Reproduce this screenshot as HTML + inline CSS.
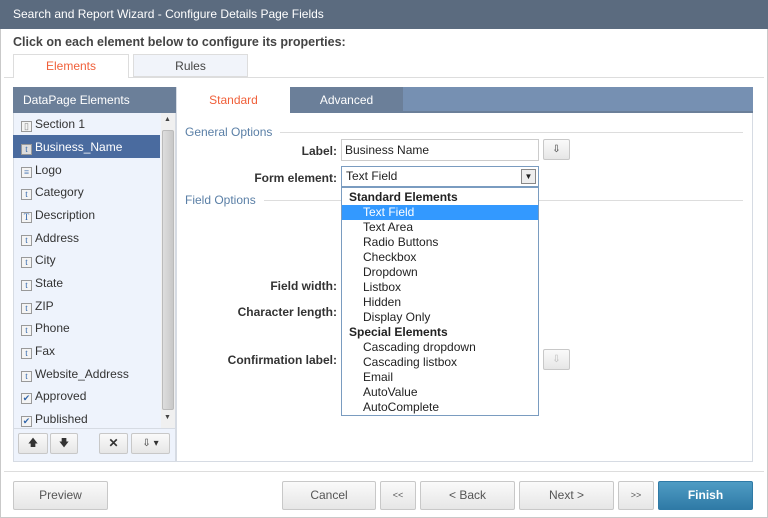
<!DOCTYPE html>
<html><head><style>
*{box-sizing:border-box;margin:0;padding:0}
body{width:768px;height:518px;background:#fff;font-family:"Liberation Sans",sans-serif;font-size:12px;color:#222;position:relative;overflow:hidden}
.a{position:absolute}
.btn{position:absolute;border:1px solid #c8c8c8;background:linear-gradient(#fafafa,#e6e6e6);text-align:center;color:#555;font-size:12px;border-radius:2px}
.item{position:absolute;left:21px;font-size:12px;color:#333}
.ic{display:inline-block;width:11px;height:11px;border:1px solid #999;background:#f4f4f4;font-size:9px;line-height:9px;text-align:center;color:#3366aa;margin-right:3px;vertical-align:-1px;font-family:"Liberation Serif",serif}
.dd div{height:15px;line-height:15px;padding-left:21px;font-size:12px}
.lbl{position:absolute;font-weight:bold;font-size:12px;color:#333;text-align:right;width:160px}
</style></head><body>
<div class="a" style="left:0;top:0;width:768px;height:518px;border:1px solid #c9c9c9"></div>
<div class="a" style="left:0;top:0;width:768px;height:29px;background:#5b6b7f;color:#fff;font-size:12px;line-height:29px;padding-left:13px">Search and Report Wizard - Configure Details Page Fields</div>
<div class="a" style="left:13px;top:35px;font-weight:bold;color:#444;font-size:12.5px">Click on each element below to configure its properties:</div>
<div class="a" style="left:4px;top:77px;width:760px;height:1px;background:#ddd"></div>
<div class="a" style="left:13px;top:54px;width:116px;height:24px;background:#fff;border:1px solid #ddd;border-bottom:none;color:#f0603a;text-align:center;line-height:23px">Elements</div>
<div class="a" style="left:133px;top:54px;width:115px;height:23px;background:#f1f4fa;border:1px solid #ddd;color:#444;text-align:center;line-height:23px">Rules</div>
<!-- left panel -->
<div class="a" style="left:13px;top:87px;width:163px;height:375px;border:1px solid #d6dbe3;background:#eef3fc"></div>
<div class="a" style="left:13px;top:87px;width:163px;height:26px;background:#6b7f99;color:#fff;line-height:26px;padding-left:10px">DataPage Elements</div>
<div class="a" style="left:13px;top:135px;width:147px;height:23px;background:#4a6b9f"></div>
<div class="a" style="left:161px;top:113px;width:14px;height:316px;background:#f0f0f0"></div>
<div class="a" style="left:162px;top:130px;width:12px;height:280px;background:linear-gradient(90deg,#ddd,#c8c8c8);border:1px solid #bbb;border-radius:2px"></div>
<div class="a" style="left:164px;top:116px;font-size:7px;color:#444">▲</div>
<div class="a" style="left:164px;top:414px;font-size:7px;color:#444">▼</div>
<div class="item" style="top:117px"><span class="ic" style="color:#888">▯</span>Section 1</div>
<div class="item" style="top:140px;color:#fff"><span class="ic" style="background:#ddd">t</span>Business_Name</div>
<div class="item" style="top:163px"><span class="ic">≡</span>Logo</div>
<div class="item" style="top:185px"><span class="ic">t</span>Category</div>
<div class="item" style="top:208px"><span class="ic">T</span>Description</div>
<div class="item" style="top:231px"><span class="ic">t</span>Address</div>
<div class="item" style="top:253px"><span class="ic">t</span>City</div>
<div class="item" style="top:276px"><span class="ic">t</span>State</div>
<div class="item" style="top:299px"><span class="ic">t</span>ZIP</div>
<div class="item" style="top:321px"><span class="ic">t</span>Phone</div>
<div class="item" style="top:344px"><span class="ic">t</span>Fax</div>
<div class="item" style="top:367px"><span class="ic">t</span>Website_Address</div>
<div class="item" style="top:389px"><span class="ic" style="font-family:sans-serif">✔</span>Approved</div>
<div class="item" style="top:412px"><span class="ic" style="font-family:sans-serif">✔</span>Published</div>
<div class="a" style="left:14px;top:428px;width:161px;height:1px;background:#d6dbe3"></div>
<div class="btn" style="left:18px;top:433px;width:30px;height:21px;line-height:19px;font-size:10px;color:#333">🡅</div>
<div class="btn" style="left:50px;top:433px;width:28px;height:21px;line-height:19px;font-size:10px;color:#333">🡇</div>
<div class="btn" style="left:99px;top:433px;width:29px;height:21px;line-height:19px;color:#333;font-weight:bold">✕</div>
<div class="btn" style="left:131px;top:433px;width:39px;height:21px;line-height:19px;font-size:10px;color:#333">⇩ ▾</div>
<!-- right panel -->
<div class="a" style="left:176px;top:87px;width:577px;height:375px;border:1px solid #d6dbe3;background:#fff"></div>
<div class="a" style="left:290px;top:87px;width:113px;height:26px;background:#6b7f99;color:#fff;text-align:center;line-height:26px">Advanced</div>
<div class="a" style="left:403px;top:87px;width:350px;height:26px;background:#7690b2"></div>
<div class="a" style="left:403px;top:111px;width:350px;height:2px;background:#6b7f99"></div>
<div class="a" style="left:177px;top:87px;width:113px;height:26px;background:#fff;color:#f0603a;text-align:center;line-height:26px">Standard</div>
<div class="a" style="left:185px;top:125px;color:#5a7fa6">General Options</div>
<div class="a" style="left:280px;top:132px;width:463px;height:1px;background:#ddd"></div>
<div class="a" style="left:185px;top:193px;color:#5a7fa6">Field Options</div>
<div class="a" style="left:264px;top:200px;width:479px;height:1px;background:#ddd"></div>
<div class="lbl" style="left:177px;top:144px">Label:</div>
<div class="lbl" style="left:177px;top:171px">Form element:</div>
<div class="lbl" style="left:177px;top:279px">Field width:</div>
<div class="lbl" style="left:177px;top:305px">Character length:</div>
<div class="lbl" style="left:177px;top:353px">Confirmation label:</div>
<div class="a" style="left:341px;top:139px;width:198px;height:22px;border:1px solid #ccc;line-height:20px;padding-left:3px">Business Name</div>
<div class="btn" style="left:543px;top:139px;width:27px;height:21px;line-height:19px;font-size:10px;color:#333">⇩</div>
<div class="btn" style="left:543px;top:349px;width:27px;height:21px;line-height:19px;font-size:10px;color:#bbb">⇩</div>
<div class="a" style="left:341px;top:166px;width:198px;height:21px;border:1px solid #7a9cc0;line-height:19px;padding-left:4px">Text Field</div>
<div class="a" style="left:521px;top:169px;width:15px;height:15px;border:1px solid #888;background:#eee;font-size:8px;text-align:center;line-height:13px">▼</div>
<div class="a dd" style="left:341px;top:187px;width:198px;height:229px;border:1px solid #7a9cc0;background:#fff;padding-top:2px">
<div style="font-weight:bold;padding-left:7px">Standard Elements</div>
<div style="background:#3399ff;color:#fff">Text Field</div>
<div>Text Area</div><div>Radio Buttons</div><div>Checkbox</div><div>Dropdown</div><div>Listbox</div><div>Hidden</div><div>Display Only</div>
<div style="font-weight:bold;padding-left:7px">Special Elements</div>
<div>Cascading dropdown</div><div>Cascading listbox</div><div>Email</div><div>AutoValue</div><div>AutoComplete</div>
</div>
<!-- footer -->
<div class="a" style="left:4px;top:471px;width:760px;height:1px;background:#ddd"></div>
<div class="btn" style="left:13px;top:481px;width:95px;height:29px;line-height:27px">Preview</div>
<div class="btn" style="left:282px;top:481px;width:94px;height:29px;line-height:27px">Cancel</div>
<div class="btn" style="left:380px;top:481px;width:36px;height:29px;line-height:27px;font-size:9px">&lt;&lt;</div>
<div class="btn" style="left:420px;top:481px;width:95px;height:29px;line-height:27px">&lt; Back</div>
<div class="btn" style="left:519px;top:481px;width:95px;height:29px;line-height:27px">Next &gt;</div>
<div class="btn" style="left:618px;top:481px;width:36px;height:29px;line-height:27px;font-size:9px">&gt;&gt;</div>
<div class="btn" style="left:658px;top:481px;width:95px;height:29px;line-height:27px;background:linear-gradient(#4f9cc4,#2f7aa6);border-color:#2f7aa6;color:#fff;font-weight:bold">Finish</div>
</body></html>
